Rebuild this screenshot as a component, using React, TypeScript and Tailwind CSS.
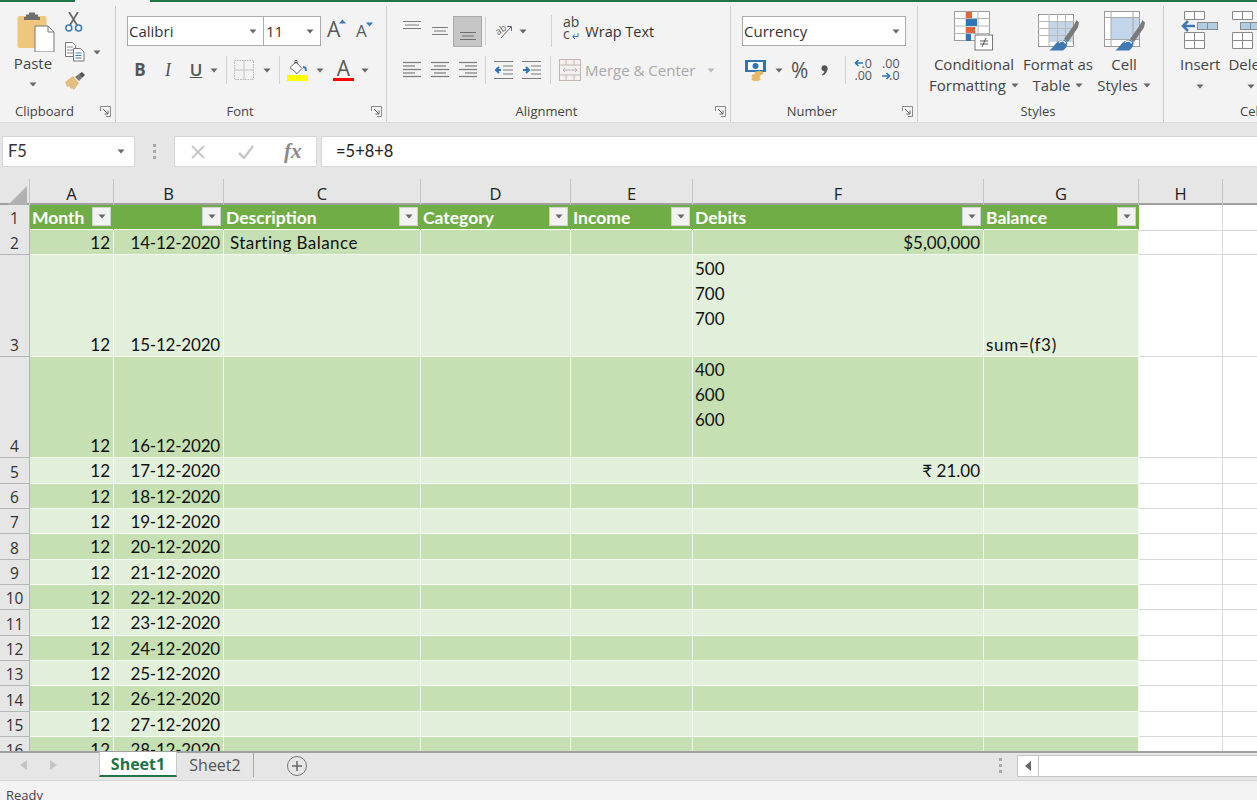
import type { ReactNode } from "react";

const UI = "font-['Open_Sans','Noto_Sans',sans-serif]";
const CELL = "font-['Lato','Carlito',sans-serif]";

const COLS = ["A", "B", "C", "D", "E", "F", "G", "H", ""];
const WIDTHS = "grid-cols-[30px_84px_110px_197px_150px_122px_291px_155px_84px_1fr]";

const Caret = ({ className = "" }: { className?: string }) => (
  <svg width="8" height="5" viewBox="0 0 8 5" className={`shrink-0 ${className}`}>
    <path d="M0.5 0.5h7L4 4.5z" fill="#666" />
  </svg>
);

const Launcher = () => (
  <svg width="11" height="11" viewBox="0 0 11 11" className="shrink-0">
    <path d="M0.5 5V0.5H10.5V10.5H6" fill="none" stroke="#8a8a8a" />
    <path d="M3 3l5 5M8 4.5V8H4.5" fill="none" stroke="#666" />
  </svg>
);

const Sep = ({ className = "" }: { className?: string }) => (
  <div className={`w-px h-[28px] bg-[#d2d2d2] shrink-0 ${className}`} />
);

const Group = ({ width, label, children, launcher = true, labelClass = "" }: { width: string; label: string; children: ReactNode; launcher?: boolean; labelClass?: string }) => (
  <div className={`${width} shrink-0 h-full flex flex-col border-r border-[#cfcfcf]`}>
    <div className="flex-1 min-h-0 relative">{children}</div>
    <div className={`h-[21px] flex items-center text-[13px] text-[#444] relative ${labelClass}`}>
      <span className="flex-1 text-center">{label}</span>
      {launcher && <span className="absolute right-[4px] top-[5px]"><Launcher /></span>}
    </div>
  </div>
);

const AlignLines = ({ kind }: { kind: "l" | "c" | "r" }) => {
  const pts = [[0, 18], [3, 15], [0, 18], [3, 15], [0, 18]];
  return (
    <svg width="18" height="20" viewBox="0 0 18 20" className="shrink-0">
      {pts.map(([a, b], i) => {
        const len = b - a;
        const x = kind === "l" ? 0 : kind === "r" ? 18 - len : (18 - len) / 2;
        return <path key={i} d={`M${x} ${2.5 + i * 3.5}h${len}`} stroke="#7b7b7b" strokeWidth="1.2" />;
      })}
    </svg>
  );
};

const Indent = ({ flip }: { flip?: boolean }) => (
  <svg width="19" height="20" viewBox="0 0 19 20" className="shrink-0">
    <path d="M0 1.5h19M9 6h10M9 10h10M9 14h10M0 18.5h19" stroke="#7b7b7b" strokeWidth="1.2" />
    {flip ? <path d="M1 10h5M4 7l3 3-3 3" fill="none" stroke="#2e75b6" strokeWidth="2" /> : <path d="M7 10H2M5 7l-3 3 3 3" fill="none" stroke="#2e75b6" strokeWidth="2" />}
  </svg>
);

const ClipboardIcon = () => (
  <svg width="38" height="40" viewBox="0 0 38 40">
    <rect x="0.5" y="4" width="29" height="32" rx="2" fill="#eec67c" />
    <path d="M9 5V2.5h3V0.5h6v2h3V5h2v3H7V5z" fill="#6f6f6f" />
    <path d="M18 14h13l6 6v20H18z" fill="#fff" stroke="#777" />
    <path d="M31 14v6h6" fill="none" stroke="#777" />
  </svg>
);

const Scissors = () => (
  <svg width="18" height="20" viewBox="0 0 18 20">
    <path d="M4 0l8 13M13 0L5 13" stroke="#6b6b6b" strokeWidth="1.8" fill="none" />
    <circle cx="3.8" cy="16" r="3" fill="none" stroke="#3f79b5" strokeWidth="1.5" />
    <circle cx="13.6" cy="16" r="3" fill="none" stroke="#3f79b5" strokeWidth="1.5" />
  </svg>
);

const CopyIcon = () => (
  <svg width="20" height="20" viewBox="0 0 20 20">
    <path d="M0.5 0.5h7l3 3v11h-10z" fill="#fff" stroke="#777" />
    <path d="M2 5h6M2 8h6M2 11h6" stroke="#888" />
    <path d="M8.5 6.5h7l3.5 3.5v9h-10.5z" fill="#fff" stroke="#777" />
    <path d="M10.5 11h6M10.5 13.5h6M10.5 16h6" stroke="#3f79b5" />
  </svg>
);

const Painter = () => (
  <svg width="20" height="18" viewBox="0 0 20 18">
    <path d="M0 10l8-6 6 7-5 7-2-2-1 1-2-3-2 1z" fill="#e2bd7e" />
    <path d="M10 5l4-3 3 4-3 3z" fill="#777" />
    <path d="M14 2l3-2 3 3-3 3z" fill="#555" />
  </svg>
);

const GrowA = ({ size, up }: { size: number; up: boolean }) => (
  <span className="relative inline-flex items-end">
    <span className="text-[#5a5a5a] leading-none" style={{ fontSize: size }}>A</span>
    <svg width="7" height="5" viewBox="0 0 7 5" className="absolute -right-[6px] top-[0px]">
      <path d={up ? "M0 4.5h7L3.5 0.5z" : "M0 0.5h7L3.5 4.5z"} fill="#3f79b5" />
    </svg>
  </span>
);

const Borders = () => (
  <svg width="20" height="20" viewBox="0 0 20 20" className="shrink-0">
    <rect x="0.5" y="0.5" width="19" height="19" fill="none" stroke="#b5b5b5" strokeDasharray="1.5 1" />
    <path d="M10 0v20M0 10h20" stroke="#c2c2c2" />
  </svg>
);

const FillIcon = () => (
  <svg width="22" height="22" viewBox="0 0 22 22" className="shrink-0">
    <path d="M3 8.5L9 3l6 6.5-5 5z" fill="#fff" stroke="#666" />
    <path d="M8 5V1.5h2V5" fill="none" stroke="#666" />
    <path d="M16 8c2 0 3 2 3 4" fill="none" stroke="#3f79b5" strokeWidth="2" />
    <rect x="0" y="16" width="21" height="6" fill="#ffff00" />
  </svg>
);

const FontColor = () => (
  <span className="relative w-[21px] h-[22px] shrink-0 flex flex-col items-center">
    <span className="text-[21px] leading-[19px] text-[#5a5a5a]">A</span>
    <span className="w-full h-[5px] bg-[#ff0000] mt-auto" />
  </span>
);

const Orient = () => (
  <svg width="18" height="18" viewBox="0 0 18 18" className="shrink-0">
    <text x="1" y="11" fontSize="9.5" fill="#666" transform="rotate(-35 6 9)">ab</text>
    <path d="M6 16L16 5M12 4.5h4.500V9" fill="none" stroke="#666" />
  </svg>
);

const WrapIcon = () => (
  <span className="relative w-[18px] h-[26px] shrink-0 text-[#444] text-[14px] leading-[12px] pt-[3px]">
    <span className="block">ab</span>
    <span className="block">c</span>
    <svg width="8" height="7" viewBox="0 0 8 7" className="absolute right-0 bottom-[0px]">
      <path d="M7 0v3.500H2M4 1.500L1.500 3.500 4 6" fill="none" stroke="#3f79b5" />
    </svg>
  </span>
);

const MergeIcon = () => (
  <svg width="22" height="22" viewBox="0 0 22 22" className="shrink-0">
    <rect x="0.5" y="0.5" width="21" height="21" fill="#f5f0f0" stroke="#c4b5b5" />
    <path d="M0 6h22M0 16h22M7 0v6M15 0v6M7 16v6M15 16v6" stroke="#c4b5b5" />
    <path d="M4 11h14M6 9l-2 2 2 2M16 9l2 2-2 2" fill="none" stroke="#b5b5b5" />
  </svg>
);

const CurrencyIcon = () => (
  <svg width="22" height="21" viewBox="0 0 22 21" className="shrink-0">
    <rect x="0" y="0" width="21" height="12" fill="#2e75b6" />
    <rect x="3" y="2" width="15" height="8" fill="#fff" />
    <circle cx="10.5" cy="6" r="3" fill="#2e75b6" />
    <ellipse cx="14" cy="13" rx="4.5" ry="2" fill="#e8b866" />
    <ellipse cx="11" cy="16" rx="4.5" ry="2" fill="#e8b866" />
    <ellipse cx="11" cy="19" rx="4.5" ry="2" fill="#e8b866" />
  </svg>
);

const CommaIcon = () => (
  <svg width="7" height="11" viewBox="0 0 7 11" className="shrink-0">
    <circle cx="3.5" cy="3.2" r="3" fill="#555" />
    <path d="M6.5 3.200C6.500 6.500 4.500 9.500 1.500 10.500L1 9.500C2.500 8.500 3.500 7 3.500 5.500z" fill="#555" />
  </svg>
);

const DecimalIcon = ({ more }: { more?: boolean }) => (
  <span className="relative w-[20px] h-[24px] shrink-0 text-[#555] text-[12.5px] leading-[12px] text-right">
    <span className="block">{more ? ".00" : ".0"}</span>
    <span className="block">{more ? ".0" : ".00"}</span>
    <svg width="9" height="8" viewBox="0 0 9 8" className={`absolute ${more ? "left-0 bottom-[2px]" : "left-0 top-[1px]"}`}>
      {more ? <path d="M0 4h7M4.500 1l3 3-3 3" fill="none" stroke="#2e75b6" strokeWidth="1.6" /> : <path d="M9 4H2M4.500 1l-3 3 3 3" fill="none" stroke="#2e75b6" strokeWidth="1.6" />}
    </svg>
  </span>
);

const CondFormat = () => (
  <svg width="40" height="40" viewBox="0 0 40 40">
    <rect x="0.5" y="0.5" width="35" height="29" fill="#fff" stroke="#9a9a9a" />
    <path d="M0 7.500h36M0 15h36M0 22.500h36M12 0v30M24 0v30" stroke="#b5b5b5" />
    <rect x="12" y="1" width="6" height="6" fill="#e0653a" />
    <rect x="12" y="8" width="11" height="7" fill="#2e75b6" />
    <rect x="12" y="16" width="9" height="6" fill="#e0653a" />
    <rect x="12" y="23" width="5" height="7" fill="#2e75b6" />
    <rect x="21" y="24" width="17.500" height="15" fill="#fff" stroke="#777" />
    <path d="M26 30h8M26 33h8M32 27l-4 9" stroke="#555" fill="none" />
  </svg>
);

const TableBrush = ({ bars }: { bars?: boolean }) => (
  <svg width="42" height="40" viewBox="0 0 42 40">
    <rect x="1.5" y={bars ? 0.5 : 3.5} width="35" height={bars ? 35 : 32} fill="#fff" stroke="#9a9a9a" />
    <rect x={bars ? 8 : 12} y={bars ? 7 : 10} width={bars ? 28 : 24} height={bars ? 21 : 21} fill="#c3d5ea" />
    {bars
      ? <path d="M1 6.500h36M8 0v35M1 28.500h36M30 0v35" stroke="#a8a8a8" />
      : <path d="M1 10.500h36M1 17.500h36M1 24.500h36M12 3v32M20.500 3v32M28.500 3v32" stroke="#b8b8b8" />}
    <path d="M27 28L37 14l2.500-5 2.500 2.500-1 5L31 31z" fill="#7a7a7a" />
    <path d="M12 39.500c3-1 5-6 9-9 3-2 8-2.500 9 .500 1 3-1 6.500-4 8.500z" fill="#3f79b5" />
    <path d="M22 31.500c2-2 6-2 6.500 1" fill="none" stroke="#fff" strokeWidth="1.5" />
  </svg>
);

const InsertIcon = () => (
  <svg width="38" height="40" viewBox="0 0 38 40">
    <path d="M3.500 0.500h20v8h-20zM13.500 0v9M3.500 21.500h20v16h-20zM3.500 29.500h20M13.500 21v17" fill="#fff" stroke="#8a8a8a" />
    <rect x="16.500" y="11.500" width="20" height="7" fill="#b4cde6" stroke="#8a8a8a" />
    <path d="M26.500 11v8" stroke="#8a8a8a" />
    <path d="M14 15H2M7 10l-5 5 5 5" fill="none" stroke="#3f79b5" strokeWidth="2.5" />
  </svg>
);

const DeleteIcon = () => (
  <svg width="38" height="40" viewBox="0 0 38 40">
    <path d="M0.500 0.500h20v8h-20zM10.500 0v9M0.500 21.500h20v16h-20zM0.500 29.500h20M10.500 21v17" fill="#fff" stroke="#8a8a8a" />
    <rect x="8.500" y="11.500" width="20" height="7" fill="#b4cde6" stroke="#8a8a8a" />
    <path d="M18.500 11v8" stroke="#8a8a8a" />
  </svg>
);

const BigButton = ({ icon, lines, center, arrowBelow }: { icon: ReactNode; lines: string[]; center: string; arrowBelow?: boolean }) => (
  <div className={`${center} flex flex-col items-center`}>
    <div className="h-[40px] mt-[5px] flex justify-center">{icon}</div>
    <div className="mt-[3px] whitespace-nowrap text-[15px] leading-[21px] text-[#444] flex flex-col items-center">
      <span>{lines[0]}</span>
      {arrowBelow ? <Caret className="mt-[9px]" /> : (
        <span className="flex items-center gap-[5px]">{lines[1]}<Caret /></span>
      )}
    </div>
  </div>
);

function Ribbon() {
  return (
    <div className={`${UI} h-[122px] bg-[#f3f3f3] flex flex-col shrink-0 overflow-hidden`}>
      <div className="h-[2px] flex shrink-0">
        <div className="w-[75px] bg-[#217346]" />
        <div className="w-[75px]" />
        <div className="flex-1 bg-[#217346]" />
      </div>
      <div className="flex-1 min-h-0 flex pt-[4px]">
        {/* clipboard */}
        <Group width="w-[116px]" label="Clipboard" labelClass="pr-[28px] pl-[2px]">
          <div className="flex pl-[15px]">
            <div className="w-[36px] flex flex-col items-center text-[15px] text-[#444]">
              <div className="mt-[6px] ml-[6px]"><ClipboardIcon /></div>
              <span className="-mt-[1px] leading-[24px]">Paste</span>
              <Caret className="mt-[7px]" />
            </div>
            <div className="ml-[14px] flex flex-col items-start">
              <div className="mt-[6px] h-[30px]"><Scissors /></div>
              <div className="flex items-start gap-[8px] h-[30px]"><CopyIcon /><Caret className="mt-[8px]" /></div>
              <div className="h-[30px]"><Painter /></div>
            </div>
          </div>
        </Group>
        {/* font */}
        <Group width="w-[271px]" label="Font" labelClass="pr-[22px]">
          <div className="pl-[11px] pt-[10px]">
            <div className="flex items-center">
              <div className="w-[137px] h-[30px] bg-white border border-[#ababab] flex items-center justify-between pl-[1px] pr-[6px] text-[15px] text-[#333]">Calibri<Caret /></div>
              <div className="w-[57px] h-[30px] bg-white border border-l-0 border-[#ababab] flex items-center justify-between pl-[2px] pr-[6px] text-[15px] text-[#333]">11<Caret /></div>
              <div className="ml-[6px] w-[29px]"><GrowA size={21} up /></div>
              <div className="w-[20px]"><GrowA size={17} up={false} /></div>
            </div>
            <div className="flex items-center mt-[10px] h-[28px] text-[#555]">
              <span className="w-[16px] ml-[5px] font-bold text-[17px] text-center">B</span>
              <span className="w-[16px] ml-[12px] italic text-[18px] text-center font-['Liberation_Serif',serif]">I</span>
              <span className="w-[16px] ml-[12px] underline text-[17px] text-center font-semibold">U</span>
              <Caret className="ml-[6px]" />
              <Sep className="ml-[8px]" />
              <span className="ml-[7px]"><Borders /></span>
              <Caret className="ml-[9px]" />
              <Sep className="ml-[8px]" />
              <span className="ml-[7px]"><FillIcon /></span>
              <Caret className="ml-[7px]" />
              <span className="ml-[9px]"><FontColor /></span>
              <Caret className="ml-[7px]" />
            </div>
          </div>
        </Group>
        {/* alignment */}
        <Group width="w-[344px]" label="Alignment" labelClass="pl-[0px] pr-[24px]">
          <div className="pl-[16px] pt-[10px]">
            <div className="flex items-start h-[31px]">
              <svg width="18" height="14" viewBox="0 0 18 14" className="shrink-0 mt-[4px]"><path d="M0 1.500h18M2 5h14M0 8.500h18" stroke="#7b7b7b" /></svg>
              <svg width="18" height="14" viewBox="0 0 18 14" className="shrink-0 mt-[10px] ml-[10px]"><path d="M1 1.500h16M3 5h12M1 8.500h16" stroke="#7b7b7b" /></svg>
              <div className="w-[29px] h-[31px] ml-[4px] bg-[#c6c6c6] border border-[#aaa] flex items-end justify-center pb-[5px]">
                <svg width="18" height="11" viewBox="0 0 18 11"><path d="M1 2.500h16M3 6h12M1 9.500h16" stroke="#6e6e6e" /></svg>
              </div>
              <Sep className="ml-[3px] mt-[1px]" />
              <span className="ml-[9px] mt-[6px]"><Orient /></span>
              <Caret className="ml-[6px] mt-[13px]" />
              <Sep className="ml-[24px] mt-[-1px] !h-[32px]" />
              <span className="ml-[11px]"><WrapIcon /></span>
              <span className="ml-[6px] text-[14.5px] text-[#333] leading-[31px] whitespace-nowrap">Wrap Text</span>
            </div>
            <div className="flex items-center mt-[8px] h-[30px]">
              <AlignLines kind="l" />
              <span className="ml-[10px]"><AlignLines kind="c" /></span>
              <span className="ml-[10px]"><AlignLines kind="r" /></span>
              <Sep className="ml-[8px]" />
              <span className="ml-[8px]"><Indent /></span>
              <span className="ml-[9px]"><Indent flip /></span>
              <Sep className="ml-[9px]" />
              <span className="ml-[8px]"><MergeIcon /></span>
              <span className="ml-[4px] text-[15px] text-[#a9a9a9] whitespace-nowrap">Merge &amp; Center</span>
              <Caret className="ml-[12px] opacity-40" />
            </div>
          </div>
        </Group>
        {/* number */}
        <Group width="w-[187px]" label="Number" labelClass="pr-[24px]">
          <div className="pl-[11px] pt-[10px]">
            <div className="w-[164px] h-[30px] bg-white border border-[#ababab] flex items-center justify-between pl-[1px] pr-[5px] text-[15px] text-[#333]">Currency<Caret /></div>
            <div className="flex items-center mt-[10px] h-[28px]">
              <span className="ml-[3px]"><CurrencyIcon /></span>
              <Caret className="ml-[8px]" />
              <span className="ml-[8px] text-[21px] leading-none text-[#555]">%</span>
              <span className="ml-[13px]"><CommaIcon /></span>
              <Sep className="ml-[17px]" />
              <span className="ml-[8px]"><DecimalIcon /></span>
              <span className="ml-[10px]"><DecimalIcon more /></span>
            </div>
          </div>
        </Group>
        {/* styles */}
        <Group width="w-[246px]" label="Styles" launcher={false} labelClass="pr-[5px]">
          <div className="flex pl-[11px]">
            <BigButton center="w-[90px]" icon={<CondFormat />} lines={["Conditional", "Formatting"]} />
            <BigButton center="w-[78px]" icon={<TableBrush />} lines={["Format as", "Table"]} />
            <BigButton center="w-[54px]" icon={<TableBrush bars />} lines={["Cell", "Styles"]} />
          </div>
        </Group>
        {/* cells */}
        <div className="flex-1 h-full flex flex-col overflow-hidden">
          <div className="flex-1 min-h-0 flex pl-[16px]">
            <BigButton center="w-[45px]" icon={<InsertIcon />} lines={["Insert"]} arrowBelow />
            <BigButton center="w-[50px] ml-[8px]" icon={<DeleteIcon />} lines={["Delete"]} arrowBelow />
          </div>
          <div className="h-[21px] flex items-center text-[13px] text-[#444] pl-[76px] whitespace-nowrap">Cells</div>
        </div>
      </div>
    </div>
  );
}

function FormulaBar() {
  return (
    <div className="h-[57px] bg-[#e6e6e6] shrink-0 border-t border-[#dcdcdc] pt-[13px] flex items-start">
      <div className={`${CELL} ml-[2px] w-[133px] h-[31px] bg-white border border-[#d6d6d6] flex items-center justify-between pl-[5px] pr-[9px] text-[16.5px] text-[#333]`}>
        F5<Caret />
      </div>
      <div className="w-[39px] h-[31px] flex flex-col items-center justify-center gap-[3px]">
        <i className="w-[3px] h-[3px] bg-[#a8a8a8]" />
        <i className="w-[3px] h-[3px] bg-[#a8a8a8]" />
        <i className="w-[3px] h-[3px] bg-[#a8a8a8]" />
      </div>
      <div className="w-[143px] h-[31px] bg-white border border-[#d6d6d6] flex items-center pl-[16px]">
        <svg width="14" height="14" viewBox="0 0 14 14"><path d="M1 1l12 12M13 1L1 13" stroke="#c8c8c8" strokeWidth="2" /></svg>
        <svg width="16" height="14" viewBox="0 0 16 14" className="ml-[33px]"><path d="M1 8l5 5L15 1" fill="none" stroke="#c8c8c8" strokeWidth="2.5" /></svg>
        <span className="ml-[30px] font-['Liberation_Serif',serif] italic font-bold text-[21px] text-[#8a8a8a] leading-none">fx</span>
      </div>
      <div className={`${CELL} ml-[4px] flex-1 h-[31px] bg-white border border-r-0 border-[#d6d6d6] flex items-center pl-[14px] text-[16.5px] text-[#222]`}>=5+8+8</div>
    </div>
  );
}

const HeaderCell = ({ label }: { label: string }) => (
  <div className="h-full border-r border-[#70ad47] bg-[#70ad47] text-white font-bold text-[17.5px] leading-[22px] flex items-start justify-between pl-[2px] pr-[2px] pt-[2px] border-b-[2px] border-b-white box-border overflow-hidden">
    <span className="whitespace-nowrap">{label}</span>
    <span className="w-[19px] h-[19px] bg-[#f2f2f2] border border-[#d0d0d0] flex items-center justify-center shrink-0"><Caret /></span>
  </div>
);

type RowData = { n: number; h: string; date: string; desc?: string; debit?: string[]; debitRight?: string; bal?: string };

const DATA: RowData[] = [
  { n: 2, h: "h-[25.33px]", date: "14-12-2020", desc: "Starting Balance", debitRight: "$5,00,000" },
  { n: 3, h: "h-[101.67px]", date: "15-12-2020", debit: ["500", "700", "700"], bal: "sum=(f3)" },
  { n: 4, h: "h-[101px]", date: "16-12-2020", debit: ["400", "600", "600"] },
  { n: 5, h: "h-[25.67px]", date: "17-12-2020", debitRight: "₹ 21.00" },
  { n: 6, h: "h-[25.33px]", date: "18-12-2020" },
  { n: 7, h: "h-[25.33px]", date: "19-12-2020" },
  { n: 8, h: "h-[25.33px]", date: "20-12-2020" },
  { n: 9, h: "h-[25.33px]", date: "21-12-2020" },
  { n: 10, h: "h-[25.33px]", date: "22-12-2020" },
  { n: 11, h: "h-[25.33px]", date: "23-12-2020" },
  { n: 12, h: "h-[25.33px]", date: "24-12-2020" },
  { n: 13, h: "h-[25.33px]", date: "25-12-2020" },
  { n: 14, h: "h-[25.33px]", date: "26-12-2020" },
  { n: 15, h: "h-[25.33px]", date: "27-12-2020" },
  { n: 16, h: "h-[25.33px]", date: "28-12-2020" },
];

const Cell = ({ bg, children, className = "" }: { bg: string; children?: ReactNode; className?: string }) => (
  <div className={`${bg} border-r border-b border-white/80 pl-[2px] pr-[3px] leading-[25.33px] whitespace-nowrap overflow-hidden flex flex-col justify-end ${className}`}>
    <div className="translate-y-[1px]">{children}</div>
  </div>
);

function DataRow({ row }: { row: RowData }) {
  const bg = row.n % 2 === 0 ? "bg-[#c6e0b4]" : "bg-[#e2efda]";
  return (
    <div className={`grid ${WIDTHS} ${row.h}`}>
      <div className={`${UI} bg-[#e6e6e6] border-r border-b border-[#b4b4b4] text-[15.5px] text-[#333] flex items-end justify-center leading-[22px]`}>{row.n}</div>
      <Cell bg={bg} className="text-right">12</Cell>
      <Cell bg={bg} className="text-right tracking-[-0.2px]">{row.date}</Cell>
      <Cell bg={bg} className="pl-[6px] tracking-[0.45px]">{row.desc}</Cell>
      <Cell bg={bg} />
      <Cell bg={bg} />
      <Cell bg={bg} className={row.debitRight ? "text-right" : ""}>
        {row.debit?.map((d, i) => <div key={i}>{d}</div>)}
        {row.debit && <div>&nbsp;</div>}
        {row.debitRight}
      </Cell>
      <Cell bg={bg} className="tracking-[0.7px]">{row.bal}</Cell>
      <div className="border-r border-b border-[#d9d9d9]" />
      <div className="border-b border-[#d9d9d9]" />
    </div>
  );
}

function Sheet() {
  return (
    <div className={`${CELL} flex-1 min-h-0 overflow-hidden bg-white text-[17px] text-[#111]`}>
      <div className={`grid ${WIDTHS} h-[26px] bg-[#e6e6e6] border-b-[2px] border-[#a0a0a0] text-[16.5px] text-[#222]`}>
        <div className="border-r border-[#c4c4c4] flex items-end justify-end pr-[2px] pb-[2px]">
          <svg width="19" height="19" viewBox="0 0 19 19"><path d="M19 0v19H0z" fill="#b1b1b1" /></svg>
        </div>
        {COLS.map((c, i) => (
          <div key={i} className={`${UI} flex items-center justify-center pt-[3px] ${i < 8 ? "border-r border-[#c4c4c4]" : ""}`}>{c}</div>
        ))}
      </div>
      <div className={`grid ${WIDTHS} h-[25px]`}>
        <div className={`${UI} bg-[#e6e6e6] border-r border-b border-[#b4b4b4] text-[15.5px] text-[#333] flex items-center justify-center pt-[2px]`}>1</div>
        {["Month", "", "Description", "Category", "Income", "Debits", "Balance"].map((h, i) => <HeaderCell key={i} label={h} />)}
        <div className="border-r border-b border-[#d9d9d9]" />
        <div className="border-b border-[#d9d9d9]" />
      </div>
      {DATA.map((r) => <DataRow key={r.n} row={r} />)}
    </div>
  );
}

function Tabs() {
  return (
    <div className={`${UI} h-[30px] shrink-0 bg-[#e6e6e6] border-t-[2px] border-[#a0a0a0] border-b border-b-[#d6d6d6] flex items-start`}>
      <div className="w-[99px] h-[24px] flex items-center pl-[20px] gap-[23px]">
        <svg width="7" height="10" viewBox="0 0 7 10"><path d="M7 0v10L0 5z" fill="#c4c4c4" /></svg>
        <svg width="7" height="10" viewBox="0 0 7 10"><path d="M0 0v10l7-5z" fill="#c4c4c4" /></svg>
      </div>
      <div className="w-[78px] h-[25px] -mt-[1px] bg-white border-x border-[#c8c8c8] border-b-[2px] border-b-[#217346] text-[#217346] font-bold text-[16px] flex items-center justify-center">Sheet1</div>
      <div className="w-[77px] h-[24px] border-r border-[#a8a8a8] text-[16px] text-[#555] flex items-center justify-center">Sheet2</div>
      <div className="ml-[33px] mt-[3px] w-[20px] h-[20px] rounded-full border-[1.5px] border-[#777] flex items-center justify-center">
        <svg width="10" height="10" viewBox="0 0 10 10"><path d="M5 0v10M0 5h10" stroke="#666" strokeWidth="1.5" /></svg>
      </div>
      <div className="flex-1" />
      <div className="h-[24px] flex flex-col justify-center gap-[3px] mr-[15px]">
        <i className="w-[3px] h-[3px] bg-[#a8a8a8]" />
        <i className="w-[3px] h-[3px] bg-[#a8a8a8]" />
        <i className="w-[3px] h-[3px] bg-[#a8a8a8]" />
      </div>
      <div className="w-[240px] h-[22px] mt-[2px] bg-white border border-r-0 border-[#c4c4c4] flex">
        <div className="w-[21px] h-full border-r border-[#c4c4c4] flex items-center justify-center">
          <svg width="6" height="10" viewBox="0 0 6 10"><path d="M6 0v10L0 5z" fill="#666" /></svg>
        </div>
      </div>
    </div>
  );
}

export default function App() {
  return (
    <div className="w-[1257px] h-[800px] flex flex-col overflow-hidden bg-white">
      <Ribbon />
      <FormulaBar />
      <Sheet />
      <Tabs />
      <div className={`${UI} h-[19px] shrink-0 bg-[#f3f3f3] pl-[6px] text-[13px] text-[#444] leading-[28px] overflow-hidden`}>Ready</div>
    </div>
  );
}
